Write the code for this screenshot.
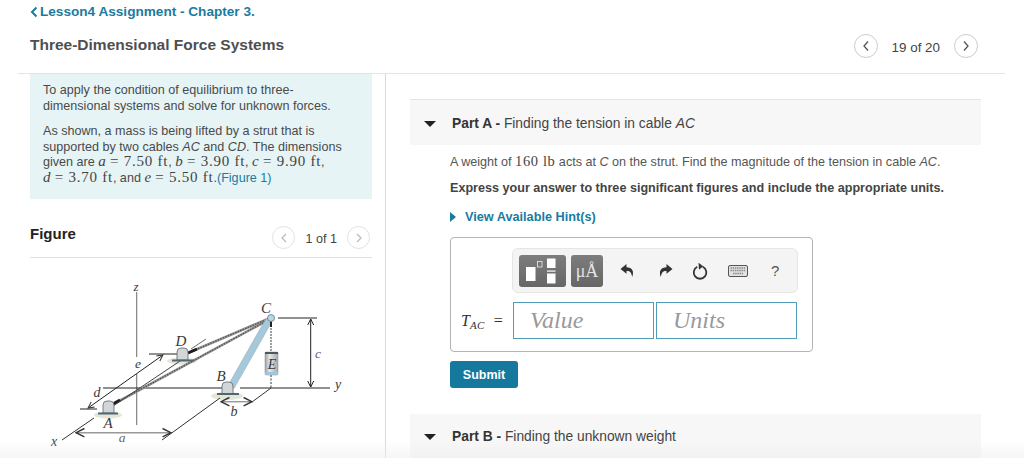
<template>
  <div class="page">
    <header class="top">
      <a class="back"><svg class="chev" width="8" height="12" viewBox="0 0 8 12"><path d="M6.500 1.500 2 6l4.500 4.500" fill="none" stroke="#1a7ba0" stroke-width="2"/></svg>Lesson4 Assignment - Chapter 3.</a>
      <div class="titlebar">
        <h1>Three-Dimensional Force Systems</h1>
        <nav class="pager">
          <span class="circle"><svg width="10" height="12" viewBox="0 0 10 12"><path d="M7 1.500 3 6l4 4.500" fill="none" stroke="#555" stroke-width="1.300"/></svg></span>
          <span class="count">19 of 20</span>
          <span class="circle"><svg width="10" height="12" viewBox="0 0 10 12"><path d="M3 1.500 7 6l-4 4.500" fill="none" stroke="#555" stroke-width="1.300"/></svg></span>
        </nav>
      </div>
    </header>

    <main class="columns">
      <section class="left">
        <div class="intro">
          <p>To apply the condition of equilibrium to three-<br>dimensional systems and solve for unknown forces.</p>
          <p class="tight">As shown, a mass is being lifted by a strut that is<br>supported by two cables <i>AC</i> and <i>CD</i>. The dimensions<br>given are <i class="m">a</i> <span class="m">= 7.50 ft</span>, <i class="m">b</i> <span class="m">= 3.90 ft</span>, <i class="m">c</i> <span class="m">= 9.90 ft</span>,<br><i class="m">d</i> <span class="m">= 3.70 ft</span>, and <i class="m">e</i> <span class="m">= 5.50 ft</span>.<a class="link">(Figure 1)</a></p>
        </div>
        <div class="figure-head">
          <h2>Figure</h2>
          <div class="figure-pager">
            <span class="circle small"><svg width="8" height="10" viewBox="0 0 8 10"><path d="M6 1 2 5l4 4" fill="none" stroke="#bbb" stroke-width="1.300"/></svg></span>
            <span class="count">1 of 1</span>
            <span class="circle small"><svg width="8" height="10" viewBox="0 0 8 10"><path d="M2 1l4 4-4 4" fill="none" stroke="#bbb" stroke-width="1.300"/></svg></span>
          </div>
        </div>
        <svg class="diagram" width="342" height="200" viewBox="30 258 342 200">
          <defs>
            <linearGradient id="can" x1="0" x2="1" y1="0" y2="0"><stop offset="0" stop-color="#9aa0a4"/><stop offset=".35" stop-color="#e6e8e8"/><stop offset="1" stop-color="#a5abaf"/></linearGradient>
            <marker id="ah" markerWidth="8" markerHeight="8" refX="7" refY="4" orient="auto-start-reverse"><path d="M1 1 7 4 1 7" fill="none" stroke="#222" stroke-width="1"/></marker>
            <marker id="ag" markerWidth="8" markerHeight="8" refX="7" refY="4" orient="auto-start-reverse"><path d="M1 1 7 4 1 7" fill="none" stroke="#333" stroke-width="1"/></marker>
          </defs>
          <ellipse cx="182" cy="361" rx="15" ry="3.500" fill="#e6e6d6"/>
          <ellipse cx="108" cy="415" rx="14" ry="3.500" fill="#e6e6d6"/>
          <ellipse cx="227" cy="396" rx="16" ry="4" fill="#e6e6d6"/>
          <path d="M136.700 292v65M136.700 374v51" stroke="#777" stroke-width="1.100" fill="none"/>
          <path d="M103 388H222M240 388H330" stroke="#222" stroke-width="1" fill="none"/>
          <path d="M62 440 94 418M162 440 220 398M252 402l19-14" stroke="#333" stroke-width="1" fill="none"/>
          <path d="M271 375v13" stroke="#333" stroke-width="1" stroke-dasharray="2 1.500"/>
          <path d="M278 318h39M80 409h17M149 354h28" stroke="#222" stroke-width="1" fill="none"/>
          <path d="M310.700 319v68" stroke="#222" stroke-width="1" marker-start="url(#ah)" marker-end="url(#ah)"/>
          <path d="M88 408 163 355" stroke="#222" stroke-width="1" marker-start="url(#ag)" marker-end="url(#ag)"/>
          <path d="M76 432.700H171" stroke="#999" stroke-width="1.400" marker-start="url(#ag)" marker-end="url(#ag)"/>
          <path d="M221 401.700H252" stroke="#999" stroke-width="1.400" marker-start="url(#ag)" marker-end="url(#ag)"/>
          <path d="M110 406 270 319M188 353 270 318" stroke="#9a9a9a" stroke-width="2.600"/>
          <path d="M110 406 270 319M188 353 270 318" stroke="#555" stroke-width="1.400" stroke-dasharray="1.500 1.200"/>
          <path d="M112 404.500 120 400M188 353 197 349" stroke="#1c1c1c" stroke-width="3"/>
          <path d="M110 408 186 357" stroke="#444" stroke-width="1"/>
          <path d="M191 349 206 339" stroke="#444" stroke-width=".8"/>
          <path d="M231 387 269 320" stroke="#a5c8da" stroke-width="6.500"/>
          <path d="M228 385.500 266 318.500M234 388.500 272 321.500" stroke="#7d9cab" stroke-width=".5"/>
          <path d="M271 322v30" stroke="#777" stroke-width="1.400" stroke-dasharray="2 1"/>
          <path d="M271 327v-8" stroke="#222" stroke-width="2"/>
          <circle cx="271" cy="318" r="3.500" fill="#bcd6e2" stroke="#5d7d8c" stroke-width=".8"/>
          <rect x="265" y="352" width="13" height="23" rx="1" fill="url(#can)" stroke="#888" stroke-width=".5"/>
          <rect x="265" y="352" width="13" height="2" fill="#555"/>
          <rect x="265" y="372" width="13" height="3" fill="#9fc5d8"/>
          <g fill="#d2d6d8" stroke="#5e666a" stroke-width=".8">
            <path d="M103 413v-8a4 4 0 0 1 4-4h3a4 4 0 0 1 4 4v8z"/>
            <path d="M177 360v-8a4 4 0 0 1 4-4h3a4 4 0 0 1 4 4v8z"/>
            <path d="M222 394v-8a4 4 0 0 1 4-4h3a4 4 0 0 1 4 4v8z"/>
          </g>
          <path d="M98 413.500h20M172 360.500h22M217 394h22" stroke="#4f6876" stroke-width="2"/>
          <g class="svg-label">
            <text x="136" y="291" font-size="13">z</text>
            <text x="266" y="313" font-size="15">C</text>
            <text x="181" y="346" font-size="15">D</text>
            <text x="221" y="381" font-size="15">B</text>
            <text x="272" y="369" font-size="14">E</text>
            <text x="318" y="358" font-size="13.500" class="soft">c</text>
            <text x="338" y="389" font-size="14">y</text>
            <text x="138" y="368" font-size="13.500">e</text>
            <text x="97" y="397" font-size="14">d</text>
            <text x="108" y="428" font-size="15">A</text>
            <text x="234" y="416" font-size="14">b</text>
            <text x="122" y="442" font-size="13.500" class="soft">a</text>
            <text x="54" y="446" font-size="14">x</text>
          </g>
        </svg>
      </section>

      <section class="right">
        <div class="part first"><span class="tri"></span><span><b>Part A -</b> Finding the tension in cable <i>AC</i></span></div>
        <div class="body">
          <p class="q">A weight of <span class="m q-m">160 lb</span> acts at <i>C</i> on the strut. Find the magnitude of the tension in cable <i>AC</i>.</p>
          <p class="express">Express your answer to three significant figures and include the appropriate units.</p>
          <a class="hint"><span class="tri-r"></span>View Available Hint(s)</a>
          <div class="answer">
            <div class="toolbar">
              <span class="tbtn tpl">
                <svg width="47" height="32" viewBox="0 0 47 32">
                  <rect x="7" y="12" width="9.500" height="14" fill="#fff"/>
                  <rect x="18.500" y="6.500" width="4.500" height="5.500" fill="none" stroke="#eee" stroke-width=".8"/>
                  <rect x="28" y="3.500" width="8.500" height="9.500" fill="#fff"/>
                  <rect x="28" y="15.500" width="8.500" height="1.200" fill="#fff"/>
                  <rect x="28" y="18.500" width="8.500" height="10" fill="#fff"/>
                </svg>
              </span>
              <span class="tbtn unit">μÅ</span>
              <svg class="ico" width="16" height="16" viewBox="0 0 16 16"><path d="M6.500 1 .5 6l6 4.800V8c3-.3 5 1 5.700 6C14.500 8 12 4.300 6.500 4.200z" fill="#333"/></svg>
              <svg class="ico" width="16" height="16" viewBox="0 0 16 16"><path d="M9.500 1l6 5-6 4.800V8c-3-.3-5 1-5.700 6C1.500 8 4 4.300 9.500 4.200z" fill="#333"/></svg>
              <svg class="ico" width="16" height="18" viewBox="0 0 16 18"><path d="M10.800 4.800a6.300 6.300 0 1 1-5.500 0" fill="none" stroke="#333" stroke-width="1.800"/><path d="M6.500 .8 11.200 4.300 7 7.800z" fill="#333"/></svg>
              <svg class="ico" width="20" height="12" viewBox="0 0 20 12"><rect x=".5" y=".5" width="19" height="11" rx="1.500" fill="#e2e2e2" stroke="#555"/><path d="M2.500 3h15M2.500 5.500h15M5 8.500h10" stroke="#888" stroke-width="1.400" stroke-dasharray="1.500 .7"/></svg>
              <span class="help">?</span>
            </div>
            <div class="input-row">
              <span class="lhs"><i>T</i><sub><i>AC</i></sub> =</span>
              <div class="field">Value</div>
              <div class="field">Units</div>
            </div>
          </div>
          <button class="submit">Submit</button>
        </div>
        <div class="part"><span class="tri"></span><span><b>Part B -</b> Finding the unknown weight</span></div>
      </section>
    </main>
    <div class="fade"></div>
  </div>
</template>

<style>
html, body { margin: 0; background: #fff; }
</style>

<style scoped>
.page { position: relative; width: 1024px; height: 458px; overflow: hidden; font-family: "Liberation Sans", Arial, sans-serif; color: #444; background: #fff; }
p, h1, h2 { margin: 0; }
.top { height: 73px; margin-left: 18px; width: 987px; border-bottom: 1px solid #e2e4e6; }
.back { display: flex; align-items: center; gap: 2px; height: 23px; margin-left: 12px; font-size: 13.600px; font-weight: 700; color: #1a7ba0; }
.titlebar { display: flex; justify-content: space-between; align-items: center; height: 46px; margin-left: 12px; padding-right: 27px; }
h1 { font-size: 15.500px; font-weight: 700; color: #4f4f4f; margin-top: -2px; }
.pager { display: flex; align-items: center; gap: 14px; }
.count { font-size: 13.400px; color: #444; margin-top: 2px; }
.circle { width: 24px; height: 24px; border: 1px solid #ccc; border-radius: 50%; display: flex; align-items: center; justify-content: center; box-sizing: border-box; background: #fff; }
.circle.small { width: 23px; height: 23px; border-color: #e2e2e2; }
.columns { display: flex; height: 384px; }
.left { width: 342px; margin-left: 30px; padding-right: 13px; border-right: 1px solid #d8dadc; flex: none; }
.intro { height: 125px; box-sizing: border-box; padding: 9px 13px 0; background: #e6f4f6; font-size: 12.600px; line-height: 15.500px; color: #4a4a4a; }
.tight { margin-top: 10px; }
.m { font-family: "Liberation Serif", serif; font-size: 15px; color: #444; letter-spacing: .75px; line-height: 0; }
.link { color: #1a7ba0; }
.figure-head { display: flex; justify-content: space-between; align-items: flex-start; height: 59px; border-bottom: 1px solid #dfe1e3; padding: 26px 2px 0 0; box-sizing: border-box; }
h2 { font-size: 15px; font-weight: 700; color: #222; }
.figure-pager { display: flex; align-items: center; gap: 10px; margin-top: 1px; }
.figure-pager .count { font-size: 12.600px; }
.diagram { display: block; }
.svg-label text { font-family: "Liberation Serif", serif; font-style: italic; fill: #3a3a3a; text-anchor: middle; }
.svg-label text.soft { fill: #666; }
.right { margin-left: 24px; width: 571px; padding-top: 25px; }
.part { display: flex; align-items: center; background: #f7f7f7; height: 46px; font-size: 13.800px; color: #444; box-sizing: border-box; padding-left: 14px; gap: 16px; }
.part.first { border-top: 1px solid #e4e4e4; padding-top: 1px; }
.part:not(.first) { margin-top: 26px; height: 44px; }
.part b { color: #333; }
.tri { width: 0; height: 0; border-left: 6px solid transparent; border-right: 6px solid transparent; border-top: 6px solid #222; margin-top: 2px; }
.body { padding-left: 40px; }
.q { font-size: 12.600px; color: #555; margin-top: 8px; line-height: 18px; white-space: nowrap; }
.q-m { font-size: 14.500px; letter-spacing: .6px; }
.express { font-size: 12.600px; font-weight: 700; color: #444; margin-top: 8px; line-height: 18px; white-space: nowrap; }
.hint { display: flex; align-items: center; font-size: 12.700px; font-weight: 700; color: #1a7ba0; margin-top: 11px; height: 18px; }
.tri-r { width: 0; height: 0; border-top: 5px solid transparent; border-bottom: 5px solid transparent; border-left: 6px solid #1a7ba0; margin: 0 9px 0 0; }
.answer { width: 363px; height: 115px; box-sizing: border-box; border: 1px solid #b4b4b4; border-radius: 4px; margin-top: 11px; }
.toolbar { width: 286px; height: 45px; margin: 10px 0 0 61px; box-sizing: border-box; background: #f4f4f4; border: 1px solid #e6e6e6; border-radius: 6px; display: flex; align-items: center; padding-left: 6px; }
.tbtn { height: 32px; border-radius: 3px; background: linear-gradient(#7d7d7d, #666); display: flex; align-items: center; justify-content: center; box-sizing: border-box; }
.tpl { width: 47px; }
.unit { width: 32px; margin-left: 5px; color: #e4e4e4; font-family: "Liberation Serif", serif; font-size: 18px; padding-top: 2px; }
.ico { margin-left: 17px; flex: none; }
.toolbar .ico:nth-of-type(2) { margin-left: 21px; }
.toolbar .ico:nth-of-type(3) { margin-left: 19px; }
.toolbar .ico:nth-of-type(4) { margin-left: 20px; }
.help { margin-left: 23px; font-size: 15px; color: #555; }
.input-row { display: flex; align-items: center; margin-top: 9px; }
.lhs { width: 62px; padding-left: 10px; box-sizing: border-box; font-family: "Liberation Serif", serif; font-size: 16px; color: #333; white-space: nowrap; }
.lhs sub { font-size: 11px; vertical-align: -3px; line-height: 0; margin-right: 5px; letter-spacing: .4px; }
.field { width: 141px; height: 37px; box-sizing: border-box; border: 1px solid #4f9db9; padding-left: 16px; margin-right: 2px; font-family: "Liberation Serif", serif; font-style: italic; font-size: 24px; line-height: 34px; color: #999; }
.submit { display: block; width: 68px; height: 27px; margin-top: 9px; background: #15799d; color: #fff; border: 0; border-radius: 3px; font-family: inherit; font-size: 12.500px; font-weight: 700; padding: 0; }
.fade { position: absolute; left: 0; right: 0; bottom: 0; height: 18px; background: linear-gradient(rgba(238,238,238,0), rgba(238,238,238,.55)); pointer-events: none; }
</style>
